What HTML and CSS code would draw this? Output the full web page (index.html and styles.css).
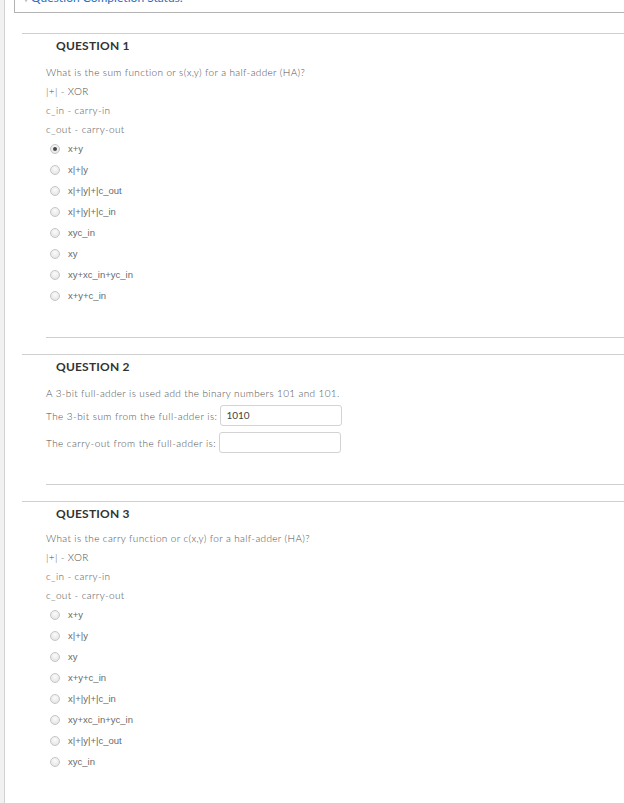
FILE: index.html
```html
<!DOCTYPE html>
<html lang="en">
<head>
<meta charset="utf-8">
<title>Quiz</title>
<link rel="stylesheet" href="styles.css">
</head>
<body>
<div class="frame">
  <div class="rail"></div>
  <main class="content">
    <div class="status"><span class="status-link"><span class="caret">&#9663;</span> Question Completion Status:</span></div>

    <section class="question">
      <h2 class="q-title">QUESTION 1</h2>
      <div class="q-body">
        <p class="q-text">What is the sum function or s(x,y) for a half-adder (HA)?</p>
        <p class="q-text">|+| - XOR</p>
        <p class="q-text">c_in - carry-in</p>
        <p class="q-text">c_out - carry-out</p>
        <ul class="options">
          <li class="option"><span class="radio checked"></span><span class="opt-label">x+y</span></li>
          <li class="option"><span class="radio"></span><span class="opt-label">x|+|y</span></li>
          <li class="option"><span class="radio"></span><span class="opt-label">x|+|y|+|c_out</span></li>
          <li class="option"><span class="radio"></span><span class="opt-label">x|+|y|+|c_in</span></li>
          <li class="option"><span class="radio"></span><span class="opt-label">xyc_in</span></li>
          <li class="option"><span class="radio"></span><span class="opt-label">xy</span></li>
          <li class="option"><span class="radio"></span><span class="opt-label">xy+xc_in+yc_in</span></li>
          <li class="option"><span class="radio"></span><span class="opt-label">x+y+c_in</span></li>
        </ul>
      </div>
    </section>

    <section class="question">
      <h2 class="q-title">QUESTION 2</h2>
      <div class="q-body">
        <p class="q-text">A 3-bit full-adder is used add the binary numbers 101 and 101.</p>
        <div class="fill-row"><span class="fill-label">The 3-bit sum from the full-adder is:</span><span class="fill-input">1010</span></div>
        <div class="fill-row"><span class="fill-label">The carry-out from the full-adder is:</span><span class="fill-input"></span></div>
      </div>
    </section>

    <section class="question q-last">
      <h2 class="q-title">QUESTION 3</h2>
      <div class="q-body">
        <p class="q-text">What is the carry function or c(x,y) for a half-adder (HA)?</p>
        <p class="q-text">|+| - XOR</p>
        <p class="q-text">c_in - carry-in</p>
        <p class="q-text">c_out - carry-out</p>
        <ul class="options">
          <li class="option"><span class="radio"></span><span class="opt-label">x+y</span></li>
          <li class="option"><span class="radio"></span><span class="opt-label">x|+|y</span></li>
          <li class="option"><span class="radio"></span><span class="opt-label">xy</span></li>
          <li class="option"><span class="radio"></span><span class="opt-label">x+y+c_in</span></li>
          <li class="option"><span class="radio"></span><span class="opt-label">x|+|y|+|c_in</span></li>
          <li class="option"><span class="radio"></span><span class="opt-label">xy+xc_in+yc_in</span></li>
          <li class="option"><span class="radio"></span><span class="opt-label">x|+|y|+|c_out</span></li>
          <li class="option"><span class="radio"></span><span class="opt-label">xyc_in</span></li>
        </ul>
      </div>
    </section>
  </main>
</div>
</body>
</html>
```

FILE: styles.css
```css
* { box-sizing: border-box; }

html, body {
  margin: 0;
  padding: 0;
  background: #fff;
}

body {
  font-family: "Lato", "Open Sans", sans-serif;
  color: #666;
  overflow: hidden;
}

.frame {
  display: flex;
  min-height: 100vh;
}

.rail {
  width: 5px;
  flex: none;
  background: #f1f1f1;
  border-right: 1px solid #d2d2d2;
}

.content {
  flex: 1;
  min-width: 0;
}

.status {
  margin: -21px 0 0 9px;
  height: 34px;
  border: 1px solid #b3b3b3;
  border-right: none;
  padding: 11px 0 0 9px;
  font-size: 12px;
  line-height: 14px;
}

.status-link {
  color: #2a6ebb;
}

.caret {
  font-size: 8px;
  color: #777;
}

.question {
  margin: 20px 0 0 17px;
  border-top: 1px solid #cfcfcf;
}

.question + .question {
  margin-top: 16px;
}

.q-title {
  margin: 5px 0 0 34px;
  font-size: 12px;
  line-height: 14px;
  font-weight: 700;
  letter-spacing: 0.2px;
  color: #333;
}

.q-body {
  margin: 10px 0 0 24px;
  padding-bottom: 31px;
  border-bottom: 1px solid #cfcfcf;
}

.q-last .q-body {
  margin-top: 8px;
}

.q-text {
  margin: 0;
  font-size: 10px;
  line-height: 19px;
  font-weight: 300;
  letter-spacing: 0.35px;
  color: #505050;
}

.options {
  list-style: none;
  margin: -1px 0 0;
  padding: 0 0 0 4px;
}

.option {
  display: flex;
  align-items: center;
  gap: 8px;
  height: 21px;
}

.radio {
  width: 10px;
  height: 10px;
  flex: none;
  border-radius: 50%;
  border: 1px solid #c6c6c6;
  background: radial-gradient(circle at 50% 35%, #fbfbfb 0%, #e8e8e8 70%, #dcdcdc 100%);
  display: flex;
  align-items: center;
  justify-content: center;
}

.radio.checked::after {
  content: "";
  width: 4px;
  height: 4px;
  border-radius: 50%;
  background: #4a4a4a;
}

.opt-label {
  font-family: "Liberation Sans", Arial, sans-serif;
  font-size: 9.5px;
  color: #6a6a6a;
}

.fill-row {
  display: flex;
  align-items: center;
  margin-top: 2px;
  font-size: 10px;
  font-weight: 300;
  letter-spacing: 0.42px;
  color: #505050;
}

.fill-row + .fill-row {
  margin-top: 6px;
}

.fill-label {
  margin-right: 3px;
}

.fill-input {
  width: 122px;
  height: 21px;
  border: 1px solid #d3d3d3;
  border-radius: 3px;
  padding: 0 5px;
  line-height: 19px;
  font-size: 10px;
  font-weight: 400;
  letter-spacing: 0;
  color: #444;
}
```
